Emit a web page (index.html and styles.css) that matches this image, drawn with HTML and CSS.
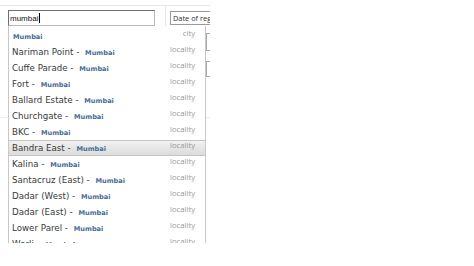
FILE: index.html
```html
<!DOCTYPE html>
<html>
<head>
<meta charset="utf-8">
<link rel="stylesheet" href="styles.css">
</head>
<body>
<div class="panel">
  <div class="toprow">
    <div class="search-cell">
      <div class="search-input"><span class="typed">mumbai</span><span class="caret"></span></div>
    </div>
    <div class="date-cell">
      <div class="date-box">Date of registration</div>
    </div>
  </div>
  <div class="formarea">
    <div class="field field-a"></div>
    <div class="field field-b"></div>
  </div>
</div>
<ul class="suggest">
  <li class="item"><span class="name"><span class="city first">Mumbai</span></span><span class="kind">city</span></li>
  <li class="item"><span class="name">Nariman Point - <span class="city">Mumbai</span></span><span class="kind">locality</span></li>
  <li class="item"><span class="name">Cuffe Parade - <span class="city">Mumbai</span></span><span class="kind">locality</span></li>
  <li class="item"><span class="name">Fort - <span class="city">Mumbai</span></span><span class="kind">locality</span></li>
  <li class="item"><span class="name">Ballard Estate - <span class="city">Mumbai</span></span><span class="kind">locality</span></li>
  <li class="item"><span class="name">Churchgate - <span class="city">Mumbai</span></span><span class="kind">locality</span></li>
  <li class="item"><span class="name">BKC - <span class="city">Mumbai</span></span><span class="kind">locality</span></li>
  <li class="item active"><span class="name">Bandra East - <span class="city">Mumbai</span></span><span class="kind">locality</span></li>
  <li class="item"><span class="name">Kalina - <span class="city">Mumbai</span></span><span class="kind">locality</span></li>
  <li class="item"><span class="name">Santacruz (East) - <span class="city">Mumbai</span></span><span class="kind">locality</span></li>
  <li class="item"><span class="name">Dadar (West) - <span class="city">Mumbai</span></span><span class="kind">locality</span></li>
  <li class="item"><span class="name">Dadar (East) - <span class="city">Mumbai</span></span><span class="kind">locality</span></li>
  <li class="item"><span class="name">Lower Parel - <span class="city">Mumbai</span></span><span class="kind">locality</span></li>
  <li class="item"><span class="name">Worli - <span class="city">Mumbai</span></span><span class="kind">locality</span></li>
</ul>
</body>
</html>
```

FILE: styles.css
```css
html, body {
  margin: 0;
  padding: 0;
  background: #ffffff;
}

body {
  position: relative;
  width: 474px;
  height: 266px;
  overflow: hidden;
  font-family: "DejaVu Sans", Verdana, sans-serif;
}

.panel {
  width: 210px;
  margin-top: 5px;
  border-top: 1px solid #e6e6e6;
  overflow: hidden;
}

.toprow {
  display: flex;
  height: 21px;
}

.search-cell {
  box-sizing: border-box;
  width: 166px;
  flex: none;
  padding: 4px 0 0 8px;
  border-right: 1px solid #e6e6e6;
}

.search-input {
  box-sizing: border-box;
  width: 147px;
  height: 16px;
  border: 1px solid;
  border-color: #6f6f6f #b8b8b8 #b8b8b8 #6f6f6f;
  display: flex;
  align-items: center;
  padding-left: 1px;
  font-family: "Liberation Sans", Arial, sans-serif;
  font-size: 8px;
  color: #111;
}

.caret {
  display: inline-block;
  width: 0;
  height: 10px;
  border-left: 1px solid #000;
  margin-left: 1px;
}

.date-cell {
  flex: none;
  padding: 5px 0 0 4px;
}

.date-box {
  box-sizing: border-box;
  height: 14px;
  border: 1px solid #9a9a9a;
  padding: 0 2px;
  white-space: nowrap;
  font-family: "Open Sans", sans-serif;
  font-size: 7.4px;
  line-height: 12px;
  color: #333;
}

.formarea {
  padding: 6px 0 40px 206px;
  border-bottom: 1px solid #ededed;
}

.field {
  box-sizing: border-box;
  width: 40px;
  border: 1px solid #a8a8a8;
}

.field-a {
  height: 18px;
  margin-bottom: 10px;
}

.field-b {
  height: 16px;
}

.suggest {
  position: absolute;
  left: 8px;
  top: 26px;
  box-sizing: border-box;
  width: 198px;
  height: 217px;
  margin: 0;
  padding: 2px 0 0 0;
  list-style: none;
  background: #ffffff;
  border-left: 1px solid #c8c8c8;
  border-right: 1px solid #c8c8c8;
  overflow: hidden;
}

.item {
  box-sizing: border-box;
  display: flex;
  justify-content: space-between;
  align-items: flex-start;
  height: 16px;
  padding: 0 10px 0 3px;
}

.item.active {
  border-top: 1px solid #c4c4c4;
  border-bottom: 1px solid #c4c4c4;
  background: linear-gradient(#f1f1f1, #dcdcdc);
}

.name {
  font-size: 8.7px;
  line-height: 16px;
  color: #3a3a3a;
  white-space: nowrap;
}

.item.active .name {
  line-height: 14px;
}

.item.active .kind {
  line-height: 8px;
}

.city {
  font-size: 6.6px;
  font-weight: bold;
  color: #4a6b96;
  margin-left: 3px;
}

.city.first {
  margin-left: 1px;
}

.kind {
  font-family: "Open Sans", sans-serif;
  font-size: 7.7px;
  line-height: 10px;
  color: #9a9a9a;
}
```
